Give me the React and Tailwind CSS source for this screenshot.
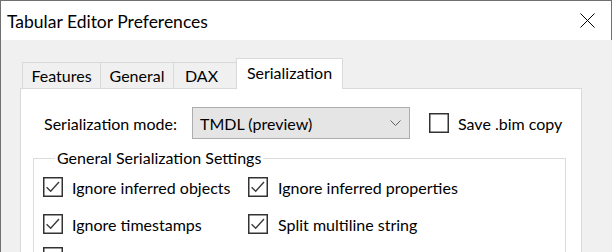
import React from "react";

function Box({ checked }) {
  return (
    <svg width="20" height="20" viewBox="0 0 20 20" className="shrink-0 block">
      <rect x="0.75" y="0.75" width="18.5" height="18.5" fill="#ffffff" stroke="#333333" strokeWidth="1.5" />
      {checked && (
        <path d="M3.6 10.2 L7.7 14.3 L16 5" fill="none" stroke="#3c3c3c" strokeWidth="1.4" />
      )}
    </svg>
  );
}

function Check({ label, checked = true, gap = "gap-[9px]" }) {
  return (
    <div className={`flex items-center h-[20px] ${gap}`}>
      <Box checked={checked} />
      <span className="leading-[20px] pt-[2px] whitespace-nowrap">{label}</span>
    </div>
  );
}

export default function App() {
  return (
    <div className="w-[612px] h-[252px] overflow-hidden bg-[#f0f0f0] text-black text-[16px] font-['Lato',sans-serif]">
      {/* title bar */}
      <div className="h-[40px] bg-white border-l border-t border-r border-[#707070] flex items-center justify-between pl-[6px] pr-[16px]">
        <span className="text-[17.5px] pt-[2px] leading-[22px]">Tabular Editor Preferences</span>
        <svg width="15" height="15" viewBox="0 0 15 15" className="block">
          <path d="M0.5 0.5 L14.5 14.5 M14.5 0.5 L0.5 14.5" stroke="#000000" strokeWidth="1" fill="none" />
        </svg>
      </div>

      {/* body */}
      <div className="border-l border-[#707070] pl-[19px] pt-[18px] h-[212px]">
        {/* tabs */}
        <div className="flex items-end h-[30px] pl-[2px]">
          <div className="h-[26px] w-[78px] border-l border-t border-[#d9d9d9] bg-[#f0f0f0] flex items-center justify-center leading-[20px]">Features</div>
          <div className="h-[26px] w-[73px] border-l border-t border-[#d9d9d9] bg-[#f0f0f0] flex items-center justify-center leading-[20px]">General</div>
          <div className="h-[26px] w-[63px] border-l border-t border-[#d9d9d9] bg-[#f0f0f0] flex items-center pl-[11px] leading-[20px]">DAX</div>
          <div className="relative z-10 -mb-px h-[31px] w-[107px] border-l border-t border-r border-[#d9d9d9] bg-white flex items-center justify-center pb-[3px] leading-[20px]">Serialization</div>
        </div>

        {/* panel */}
        <div className="w-[562px] h-[200px] bg-white border border-[#d9d9d9] pt-[18px] pl-[23px]">
          <div className="flex items-center h-[32px]">
            <span className="w-[148px] leading-[20px] pt-[1px]">Serialization mode:</span>
            <div className="w-[218px] h-[32px] bg-[#e5e5e5] border border-[#adadad] flex items-center justify-between pl-[7px] pr-[8px]">
              <span className="leading-[20px] pt-[1px]">TMDL (preview)</span>
              <svg width="11" height="6" viewBox="0 0 11 6" className="block">
                <path d="M0.5 0.5 L5.5 5.5 L10.5 0.5" fill="none" stroke="#606060" strokeWidth="1" />
              </svg>
            </div>
            <div className="ml-[19px]">
              <Check label="Save .bim copy" checked={false} />
            </div>
          </div>

          <fieldset className="-ml-[11px] mt-[7px] w-[533px] h-[140px] border border-[#dcdcdc] pl-[9px]">
            <legend className="ml-[12px] px-[2px] leading-[24px]">General Serialization Settings</legend>
            <div className="grid grid-cols-[205px_1fr] mt-[7px]">
              <Check label="Ignore inferred objects" />
              <Check label="Ignore inferred properties" gap="gap-[10px]" />
            </div>
            <div className="grid grid-cols-[205px_1fr] mt-[17px]">
              <Check label="Ignore timestamps" />
              <Check label="Split multiline string" gap="gap-[10px]" />
            </div>
            <div className="grid grid-cols-[205px_1fr] mt-[13px]">
              <Check label="Ignore lineage tags" checked={false} />
            </div>
          </fieldset>
        </div>
      </div>
    </div>
  );
}
